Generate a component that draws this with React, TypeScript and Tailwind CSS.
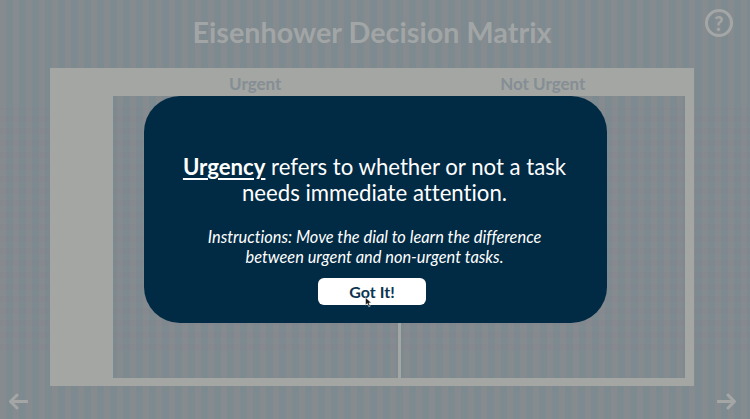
const stripes =
  "[background:repeating-linear-gradient(0deg,rgba(136,128,140,0.2)_0_6px,transparent_6px_12px)_0_108px/100%_242px_no-repeat_fixed,repeating-linear-gradient(90deg,#858b8f_0_6px,#7d8a8f_6px_13px)_fixed]";

function ArrowIcon({ flip }: { flip?: boolean }) {
  return (
    <svg width="20" height="17" viewBox="0 0 20 17" fill="none" className={flip ? "rotate-180" : ""}>
      <path d="M9 2 L2.5 8.5 L9 15 M3 8.5 H19" stroke="#a3a6a5" strokeWidth="3" strokeLinecap="round" strokeLinejoin="round" />
    </svg>
  );
}

function Cursor() {
  return (
    <svg width="7" height="11" viewBox="0 0 7 11" className="absolute left-[47px] top-[19px]">
      <path d="M0.5 0.5 V8 L2.4 6.4 L3.8 9.8 L5.2 9.2 L3.9 6 L6.3 5.8 Z" fill="#1a1a1a" stroke="#fff" strokeWidth="0.5" />
    </svg>
  );
}

export default function App() {
  return (
    <div className={`relative h-[419px] w-[750px] overflow-hidden font-['Lato',sans-serif] [font-variant-ligatures:none] ${stripes}`}>
      <h1 className="ml-[50px] w-[644px] pt-[14px] text-center text-[28.8px] leading-[36px] font-bold text-[#a1a5a5]">
        Eisenhower Decision Matrix
      </h1>

      <div className="absolute right-[17px] top-[9px] flex h-[28px] w-[28px] items-center justify-center rounded-full border-[3px] border-[#a3a6a5] text-[20px] leading-none font-black text-[#a3a6a5]">
        ?
      </div>

      <div className="mt-[18px] ml-[50px] h-[318px] w-[644px] bg-[#a3a6a2] pr-[9px] pb-[8px] pl-[63px]">
        <div className="grid h-[28px] grid-cols-2 gap-[3px] text-center text-[17px] leading-[31px] font-bold text-[#858e95]">
          <div>Urgent</div>
          <div>Not Urgent</div>
        </div>
        <div className="grid h-[282px] grid-cols-2 gap-[3px]">
          <div className={stripes} />
          <div className={stripes} />
        </div>
      </div>

      <div className="absolute bottom-[9px] left-[8px]">
        <ArrowIcon />
      </div>
      <div className="absolute bottom-[9px] right-[13px]">
        <ArrowIcon flip />
      </div>

      <div className="absolute left-[144px] top-[96px] flex h-[227px] w-[463px] flex-col items-center rounded-[36px] bg-[#012a44] pt-[58px] pr-[2px] text-center text-white">
        <p className="text-[22.2px] leading-[26px]">
          <span className="font-bold underline decoration-2 underline-offset-[3px]">Urgency</span> refers to whether or not a task
          <br />
          needs immediate attention.
        </p>
        <p className="mt-[21px] text-[16.4px] leading-[20px] italic">
          Instructions: Move the dial to learn the difference
          <br />
          between urgent and non-urgent tasks.
        </p>
        <button className="relative mt-[11px] mr-[5px] h-[27px] w-[108px] rounded-[6px] bg-white text-[16px] font-bold text-[#0b3450]">
          Got It!
          <Cursor />
        </button>
      </div>
    </div>
  );
}
